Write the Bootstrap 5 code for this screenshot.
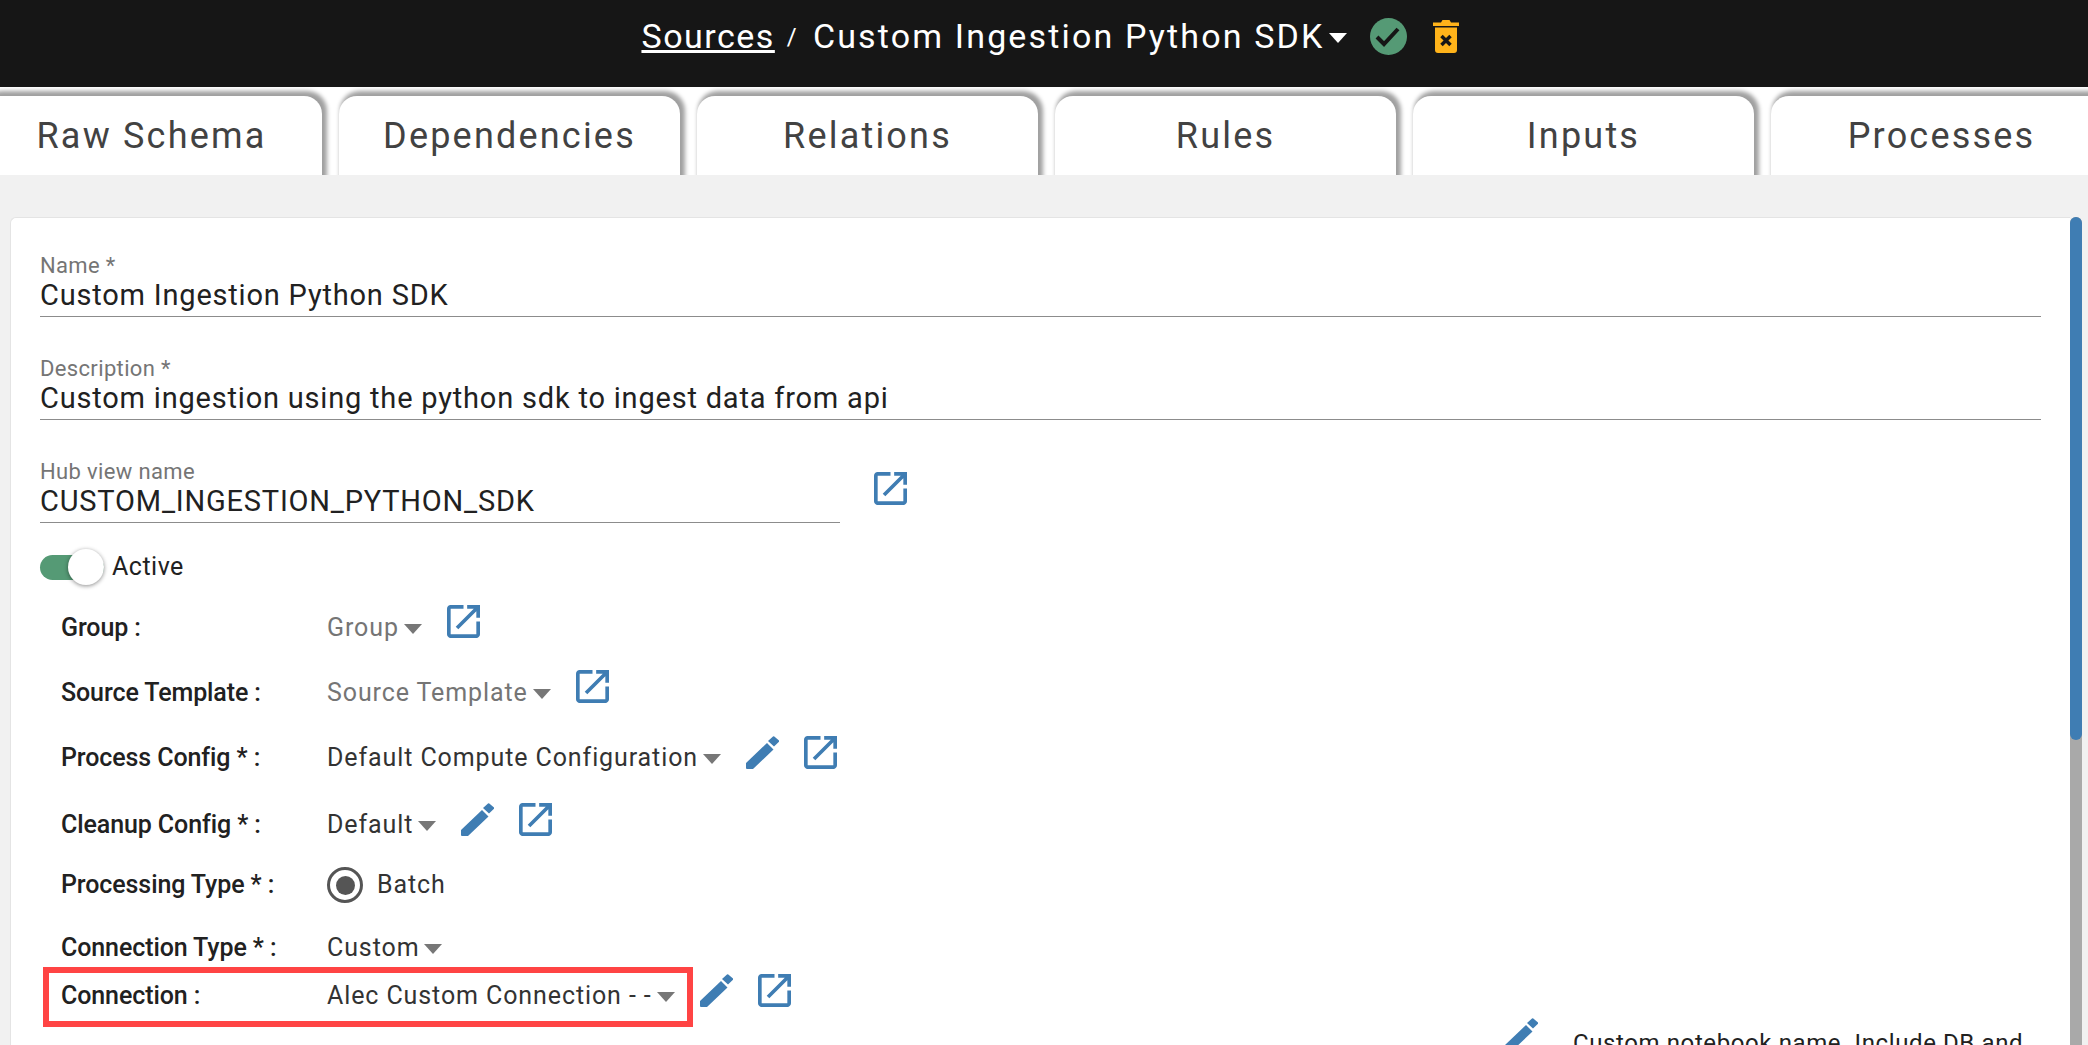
<!DOCTYPE html>
<html lang="en">
<head>
  <meta charset="UTF-8" />
  <title>Custom Ingestion Python SDK | Sources</title>
  <meta name="viewport" content="width=device-width, initial-scale=1" />
  <link href="https://cdn.jsdelivr.net/npm/bootstrap@5.3.0/dist/css/bootstrap.min.css" rel="stylesheet" />
  <style>
    html, body {
      height: 100%;
      overflow: hidden;
    }

    body {
      background: #f1f1f1;
      font-family: Roboto, "Liberation Sans", sans-serif;
      font-size: 25px;
      letter-spacing: 0.9px;
      color: #212121;
    }

    .top-bar {
      height: 87px;
      padding: 0 0 14px 12px;
      background: #161616;
      color: #fff;
      font-size: 34px;
      letter-spacing: 2.15px;
    }

    .top-bar a {
      color: #fff;
      letter-spacing: 1.5px;
    }

    .top-bar .crumb-sep {
      font-size: 24px;
      margin: 0 14px 0 12px;
    }

    .top-bar .dropdown-toggle::after {
      border-top: 10px solid #fff;
      border-left: 9px solid transparent;
      border-right: 9px solid transparent;
      border-bottom: 0;
      margin-left: 4px;
      vertical-align: 5px;
    }

    .ok-ico {
      margin-left: 23px;
    }

    .bin-ico {
      margin-left: 26px;
    }

    .tab-strip {
      height: 88px;
      padding-top: 9px;
      margin-left: -19px;
      background: #fff;
      overflow: hidden;
      gap: 17px;
    }

    .tab-item {
      flex: 0 0 341px;
      height: 100px;
      padding-top: 13px;
      border-radius: 18px 18px 0 0;
      background: #fff;
      box-shadow: 3px -3px 4px 2px #a0a0a0;
      color: #424242;
      font-size: 36px;
      letter-spacing: 2.2px;
      text-align: center;
    }

    .form-wrap {
      height: 828px;
      margin: 42px 6px 0 10px;
    }

    .form-panel {
      position: relative;
      flex: 1;
      padding: 36px 0 0 29px;
      overflow: hidden;
      background: #fff;
      border: 1px solid #e4e4e4;
      border-width: 1px 0 0 1px;
      border-radius: 6px 0 0 0;
    }

    .scroll-track {
      flex: 0 0 12px;
      background: #a9a9a9;
      border-radius: 6px 6px 0 0;
    }

    .scroll-thumb {
      height: 523px;
      border-radius: 6px;
      background: #3f7db3;
    }

    .ul-field {
      width: 2001px;
      margin-bottom: 40px;
      border-bottom: 1px solid #8c8c8c;
    }

    .ul-field.short-field {
      width: 800px;
      margin-bottom: 0;
    }

    .field-cap {
      display: block;
      margin: 0;
      height: 24px;
      line-height: 24px;
      font-size: 22px;
      letter-spacing: 0.35px;
      color: #757575;
    }

    .field-val {
      display: block;
      height: 38px;
      line-height: 34px;
      font-size: 29px;
      letter-spacing: 0.8px;
      color: #212121;
    }

    .blue-ico {
      display: block;
      flex: none;
      width: 33px;
      height: 33px;
      margin: 0 0 12px 25px;
      fill: #3f7db3;
    }

    .hub-ico {
      margin: 12px 0 0 34px;
    }

    .switch-line {
      height: 36px;
      margin-top: 26px;
      margin-bottom: 10px;
    }

    .switch-line .switch-cap {
      letter-spacing: 0.5px;
    }

    .switch-track {
      display: block;
      position: relative;
      width: 64px;
      height: 25px;
      border-radius: 13px;
      background: #559a75;
    }

    .switch-knob {
      position: absolute;
      left: 28px;
      top: -6px;
      width: 36px;
      height: 36px;
      border-radius: 50%;
      background: #fff;
      box-shadow: 0 1px 4px rgba(0, 0, 0, 0.45);
    }

    .form-line {
      padding-left: 21px;
    }

    .line-label {
      flex: 0 0 266px;
      font-size: 25px;
      font-weight: 500;
      letter-spacing: -0.1px;
      color: #212121;
    }

    .line-val {
      color: #333;
    }

    .line-val.empty-val {
      color: #757575;
    }

    .sel-caret {
      display: inline-block;
      margin-left: 5px;
      vertical-align: 2px;
      border-top: 10px solid #777;
      border-left: 9px solid transparent;
      border-right: 9px solid transparent;
    }

    .row-65 { height: 65px; }
    .row-66 { height: 66px; }
    .row-68 { height: 68px; }
    .row-52 { height: 52px; }
    .row-74 { height: 74px; }
    .row-22 { height: 22px; }

    .radio-ring {
      display: flex;
      flex: none;
      align-items: center;
      justify-content: center;
      width: 36px;
      height: 36px;
      margin-right: 14px;
      border: 3px solid #555;
      border-radius: 50%;
    }

    .radio-dot {
      width: 19px;
      height: 19px;
      border-radius: 50%;
      background: #555;
    }

    .red-mark {
      position: absolute;
      left: 32px;
      top: 749px;
      width: 650px;
      height: 60px;
      border: 6px solid #ff4444;
    }

    .note-line {
      position: absolute;
      left: 1494px;
      top: 800px;
      width: 540px;
      gap: 35px;
    }

    .note-line .blue-ico {
      margin: 0;
    }

    .note-text {
      margin-top: 7px;
      font-size: 24px;
      letter-spacing: 0.6px;
      white-space: nowrap;
    }
  </style>
</head>
<body>
  <svg width="0" height="0" class="position-absolute">
    <symbol id="ico-open" viewBox="3 3 18 18">
      <path d="M19 19H5V5h7V3H5c-1.11 0-2 .9-2 2v14c0 1.1.89 2 2 2h14c1.1 0 2-.9 2-2v-7h-2v7zM14 3v2h3.59l-9.83 9.83 1.41 1.41L19 6.41V10h2V3h-7z" />
    </symbol>
    <symbol id="ico-pencil" viewBox="0 0 33 33">
      <path d="M0 27 21 7l6.500 6.500L7 33H1a1 1 0 0 1-1-1zM22 5l5-4.500a1 1 0 0 1 1.300 0L33 4.500a1 1 0 0 1 0 1.300l-5 4.700z" />
    </symbol>
  </svg>

  <div class="top-bar d-flex align-items-center justify-content-center">
    <a href="#">Sources</a>
    <span class="crumb-sep">/</span>
    <span class="dropdown-toggle">Custom Ingestion Python SDK</span>
    <svg class="ok-ico" width="37" height="37" viewBox="0 0 37 37">
      <circle cx="18.500" cy="18.500" r="18.500" fill="#559a75" />
      <path d="M7 19l7 7L28 11" fill="none" stroke="#161616" stroke-width="4" />
    </svg>
    <svg class="bin-ico" width="26" height="33" viewBox="0 0 26 33">
      <path d="M0 2.500h8L9.500 0h7L18 2.500h8V6H0zM2 7.500h22V30a3 3 0 0 1-3 3H5a3 3 0 0 1-3-3z" fill="#ffb31a" />
      <path d="M8.500 16l9 9M17.500 16l-9 9" stroke="#161616" stroke-width="3.500" />
    </svg>
  </div>

  <div class="tab-strip d-flex">
    <div class="tab-item">Raw Schema</div>
    <div class="tab-item">Dependencies</div>
    <div class="tab-item">Relations</div>
    <div class="tab-item">Rules</div>
    <div class="tab-item">Inputs</div>
    <div class="tab-item">Processes</div>
  </div>

  <div class="form-wrap d-flex">
    <div class="form-panel">
      <div class="ul-field">
        <label class="field-cap">Name *</label>
        <span class="field-val">Custom Ingestion Python SDK</span>
      </div>
      <div class="ul-field">
        <label class="field-cap">Description *</label>
        <span class="field-val">Custom ingestion using the python sdk to ingest data from api</span>
      </div>
      <div class="d-flex align-items-start">
        <div class="ul-field short-field">
          <label class="field-cap">Hub view name</label>
          <span class="field-val">CUSTOM_INGESTION_PYTHON_SDK</span>
        </div>
        <svg class="blue-ico hub-ico"><use href="#ico-open" /></svg>
      </div>

      <div class="switch-line d-flex align-items-center gap-2">
        <span class="switch-track"><span class="switch-knob"></span></span>
        <span class="switch-cap">Active</span>
      </div>

      <div class="form-line row-65 d-flex align-items-center">
        <span class="line-label">Group :</span>
        <span class="line-val empty-val">Group<i class="sel-caret"></i></span>
        <svg class="blue-ico"><use href="#ico-open" /></svg>
      </div>
      <div class="form-line row-65 d-flex align-items-center">
        <span class="line-label">Source Template :</span>
        <span class="line-val empty-val">Source Template<i class="sel-caret"></i></span>
        <svg class="blue-ico"><use href="#ico-open" /></svg>
      </div>
      <div class="form-line row-66 d-flex align-items-center">
        <span class="line-label">Process Config * :</span>
        <span class="line-val">Default Compute Configuration<i class="sel-caret"></i></span>
        <svg class="blue-ico"><use href="#ico-pencil" /></svg>
        <svg class="blue-ico"><use href="#ico-open" /></svg>
      </div>
      <div class="form-line row-68 d-flex align-items-center">
        <span class="line-label">Cleanup Config * :</span>
        <span class="line-val">Default<i class="sel-caret"></i></span>
        <svg class="blue-ico"><use href="#ico-pencil" /></svg>
        <svg class="blue-ico"><use href="#ico-open" /></svg>
      </div>
      <div class="form-line row-52 d-flex align-items-center">
        <span class="line-label">Processing Type * :</span>
        <span class="radio-ring"><span class="radio-dot"></span></span>
        <span class="line-val">Batch</span>
      </div>
      <div class="form-line row-74 d-flex align-items-center">
        <span class="line-label">Connection Type * :</span>
        <span class="line-val">Custom<i class="sel-caret"></i></span>
      </div>
      <div class="form-line row-22 d-flex align-items-center">
        <span class="line-label">Connection :</span>
        <span class="line-val">Alec Custom Connection - -<i class="sel-caret"></i></span>
        <svg class="blue-ico"><use href="#ico-pencil" /></svg>
        <svg class="blue-ico"><use href="#ico-open" /></svg>
      </div>
      <div class="red-mark"></div>

      <div class="note-line d-flex align-items-start">
        <svg class="blue-ico"><use href="#ico-pencil" /></svg>
        <span class="note-text">Custom notebook name. Include DB and</span>
      </div>
    </div>
    <div class="scroll-track"><div class="scroll-thumb"></div></div>
  </div>

  <script src="https://cdn.jsdelivr.net/npm/bootstrap@5.3.0/dist/js/bootstrap.bundle.min.js"></script>
</body>
</html>
